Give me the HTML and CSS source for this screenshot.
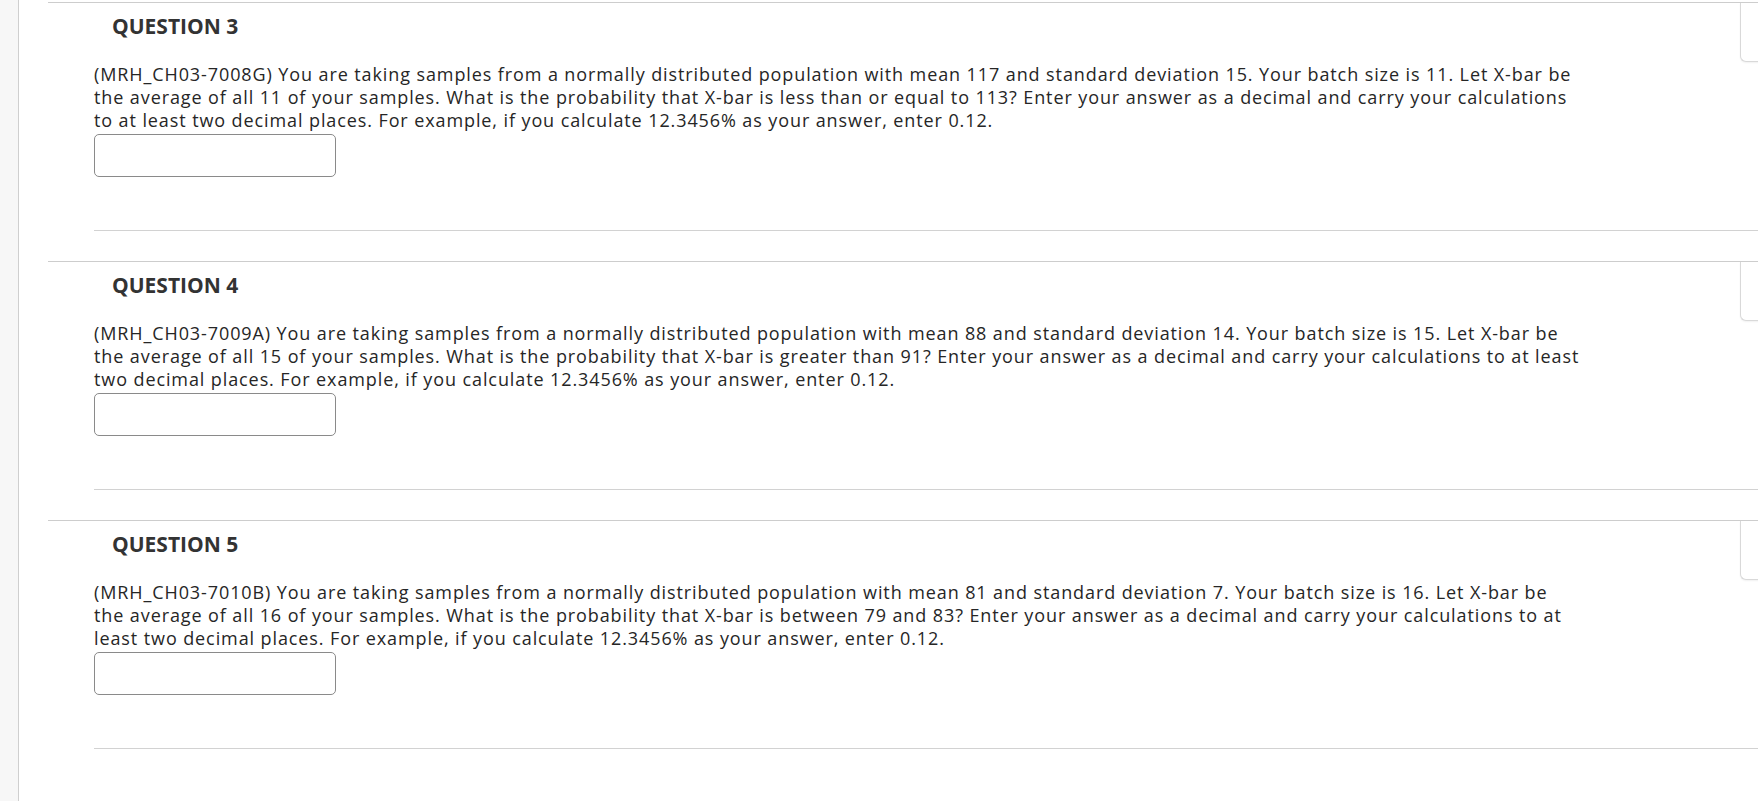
FILE: index.html
```html
<!DOCTYPE html>
<html lang="en">
<head>
<meta charset="utf-8">
<title>Questions</title>
<link rel="stylesheet" href="styles.css">
</head>
<body>
<div class="page">
  <aside class="rail"></aside>
  <main class="content">
    <section class="question">
      <div class="points-tab"></div>
      <h3 class="q-title">QUESTION 3</h3>
      <div class="q-body">
        <p class="q-text">(MRH_CH03-7008G) You are taking samples from a normally distributed population with mean 117 and standard deviation 15. Your batch size is 11. Let X-bar be the average of all 11 of your samples. What is the probability that X-bar is less than or equal to 113? Enter your answer as a decimal and carry your calculations to at least two decimal places. For example, if you calculate 12.3456% as your answer, enter 0.12.</p>
        <input class="answer" type="text" aria-label="Answer for question 3">
        <hr class="q-sep">
      </div>
    </section>
    <section class="question">
      <div class="points-tab"></div>
      <h3 class="q-title">QUESTION 4</h3>
      <div class="q-body">
        <p class="q-text">(MRH_CH03-7009A) You are taking samples from a normally distributed population with mean 88 and standard deviation 14. Your batch size is 15. Let X-bar be the average of all 15 of your samples. What is the probability that X-bar is greater than 91? Enter your answer as a decimal and carry your calculations to at least two decimal places. For example, if you calculate 12.3456% as your answer, enter 0.12.</p>
        <input class="answer" type="text" aria-label="Answer for question 4">
        <hr class="q-sep">
      </div>
    </section>
    <section class="question">
      <div class="points-tab"></div>
      <h3 class="q-title">QUESTION 5</h3>
      <div class="q-body">
        <p class="q-text">(MRH_CH03-7010B) You are taking samples from a normally distributed population with mean 81 and standard deviation 7. Your batch size is 16. Let X-bar be the average of all 16 of your samples. What is the probability that X-bar is between 79 and 83? Enter your answer as a decimal and carry your calculations to at least two decimal places. For example, if you calculate 12.3456% as your answer, enter 0.12.</p>
        <input class="answer" type="text" aria-label="Answer for question 5">
        <hr class="q-sep">
      </div>
    </section>
  </main>
</div>
</body>
</html>
```
FILE: styles.css
```css
html, body {
  margin: 0;
  padding: 0;
  background: #ffffff;
  overflow: hidden;
}

body {
  font-family: "Open Sans", "Noto Sans", "Liberation Sans", sans-serif;
  color: #262626;
}

.page {
  display: flex;
  min-height: 801px;
}

.rail {
  flex: 0 0 18px;
  background: #f7f7f7;
  border-right: 1px solid #cfcfcf;
}

.content {
  flex: 1;
  margin-left: 29px;
  padding-top: 2px;
}

.question {
  position: relative;
  border-top: 1px solid #cdcdcd;
  padding-top: 9px;
  margin-bottom: 30px;
}

.points-tab {
  position: absolute;
  top: 0;
  right: -20px;
  width: 37px;
  height: 58px;
  border-left: 1px solid #d9d9d9;
  border-bottom: 1px solid #d9d9d9;
  border-bottom-left-radius: 6px;
  background: #ffffff;
  box-shadow: 0 1px 2px rgba(0, 0, 0, 0.06);
}

.q-title {
  margin: 0 0 0 64px;
  font-size: 21px;
  line-height: 28px;
  font-weight: 700;
  color: #333333;
}

.q-body {
  padding-left: 46px;
  margin-top: 23px;
}

.q-text {
  margin: 0;
  max-width: 1486px;
  font-size: 18px;
  line-height: 23px;
  letter-spacing: 0.9px;
  color: #262626;
}

.answer {
  display: block;
  box-sizing: border-box;
  margin: 2px 0 0 0;
  width: 242px;
  height: 43px;
  border: 1px solid #8a8a8a;
  border-radius: 5px;
  background: #ffffff;
  padding: 0 8px;
  font: inherit;
}

.q-sep {
  margin: 53px 0 0 0;
  border: 0;
  border-top: 1px solid #d2d2d2;
  height: 0;
}
```
